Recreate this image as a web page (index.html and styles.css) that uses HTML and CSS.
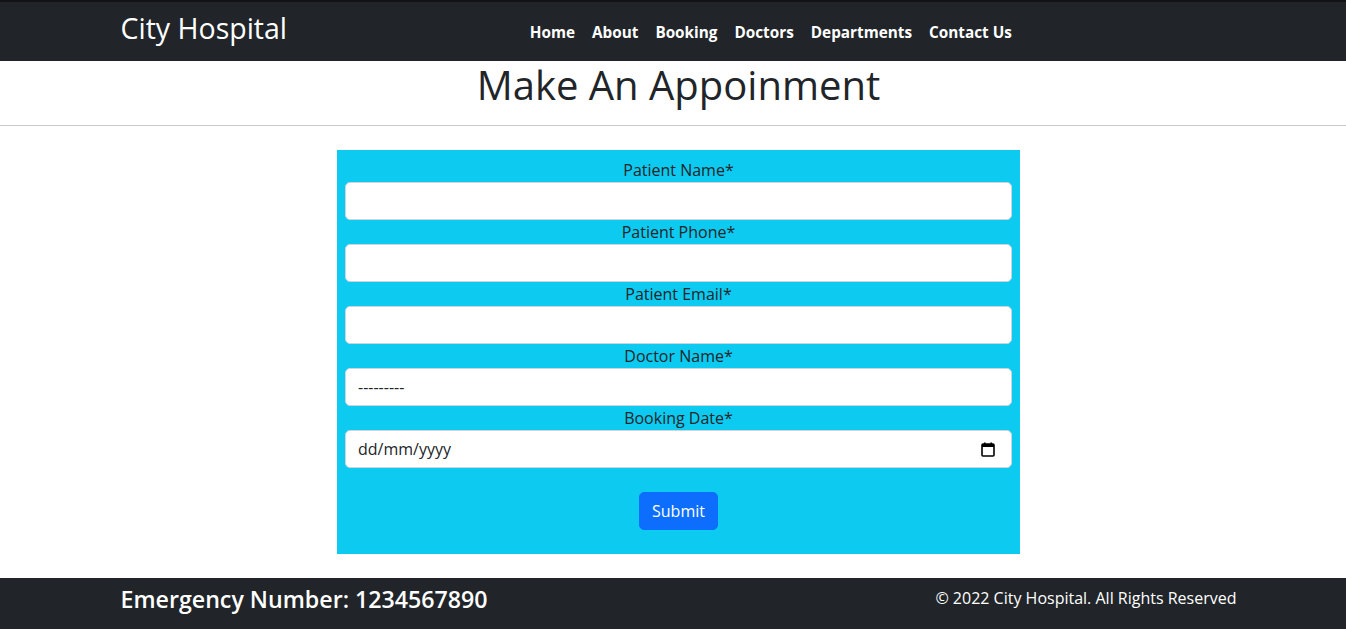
FILE: index.html
```html
<!DOCTYPE html>
<html lang="en">
<head>
<meta charset="utf-8">
<title>City Hospital - Booking</title>
<link rel="stylesheet" href="styles.css">
</head>
<body>
<nav class="navbar">
  <div class="container nav-inner">
    <a class="brand" href="#">City Hospital</a>
    <ul class="nav-links">
      <li><a href="#">Home</a></li>
      <li><a href="#">About</a></li>
      <li><a href="#">Booking</a></li>
      <li><a href="#">Doctors</a></li>
      <li><a href="#">Departments</a></li>
      <li><a href="#">Contact Us</a></li>
    </ul>
  </div>
</nav>

<main class="main">
  <h1 class="page-title">Make An Appoinment</h1>
  <hr class="divider">
  <form class="booking-form">
    <label class="field-label" for="pname">Patient Name*</label>
    <input class="field" id="pname" type="text">
    <label class="field-label" for="pphone">Patient Phone*</label>
    <input class="field" id="pphone" type="text">
    <label class="field-label" for="pemail">Patient Email*</label>
    <input class="field" id="pemail" type="text">
    <label class="field-label" for="doctor">Doctor Name*</label>
    <select class="field select" id="doctor">
      <option>---------</option>
    </select>
    <label class="field-label">Booking Date*</label>
    <div class="field date-field">
      <span class="date-text">dd/mm/yyyy</span>
      <svg class="cal-icon" width="14" height="15" viewBox="0 0 14 15" aria-hidden="true">
        <rect x="3" y="0.5" width="1.6" height="3" fill="#000"/>
        <rect x="9.4" y="0.5" width="1.6" height="3" fill="#000"/>
        <rect x="1" y="2" width="12" height="12" rx="1" fill="none" stroke="#000" stroke-width="1.6"/>
        <rect x="1" y="2" width="12" height="3" fill="#000"/>
      </svg>
    </div>
    <div class="actions">
      <button class="btn-submit" type="button">Submit</button>
    </div>
  </form>
</main>

<footer class="footer">
  <div class="container footer-inner">
    <h4 class="emergency">Emergency Number: 1234567890</h4>
    <p class="copyright">© 2022 City Hospital. All Rights Reserved</p>
  </div>
</footer>
</body>
</html>
```

FILE: styles.css
```css
* { box-sizing: border-box; }

body {
  margin: 0;
  font-family: "Open Sans", "DejaVu Sans", sans-serif;
  font-size: 16px;
  line-height: 1.5;
  color: #212529;
  background: #fff;
}

.container {
  width: 1116px;
  margin: 0 auto;
}

.navbar {
  background: #212529;
  border-top: 2px solid #111315;
  padding-left: 11px;
}

.nav-inner {
  display: flex;
  align-items: center;
  height: 59px;
}

.brand {
  color: #fff;
  text-decoration: none;
  font-size: 28.5px;
  font-weight: 500;
  margin-right: 18px;
  position: relative;
  top: -3px;
}

.nav-links {
  list-style: none;
  display: flex;
  margin: 0 auto;
  padding: 0;
  position: relative;
  top: 1px;
}

.nav-links a {
  display: block;
  color: #fff;
  text-decoration: none;
  font-weight: 700;
  font-size: 15.3px;
  padding: 8px 8.5px;
}

.main {
  padding-left: 11px;
}

.page-title {
  margin: 0;
  text-align: center;
  font-size: 40px;
  font-weight: 500;
  line-height: 48px;
}

.divider {
  margin: 16px 0 0;
  margin-left: -11px;
  border: 0;
  border-top: 1px solid #c8c9ca;
}

.booking-form {
  width: 683px;
  margin: 24px auto 0;
  background: #0dcaf0;
  padding: 8px 8px 24px;
  display: flex;
  flex-direction: column;
}

.field-label {
  text-align: center;
  line-height: 24px;
}

.field {
  display: block;
  width: 100%;
  height: 38px;
  padding: 6px 12px;
  font: inherit;
  color: #212529;
  background: #fff;
  border: 1px solid #ced4da;
  border-radius: 5px;
}

.select {
  appearance: none;
  -webkit-appearance: none;
}

.date-field {
  display: flex;
  align-items: center;
  justify-content: space-between;
  padding-right: 16px;
}

.cal-icon {
  display: block;
}

.actions {
  display: flex;
  justify-content: center;
  margin-top: 24px;
}

.btn-submit {
  font: inherit;
  color: #fff;
  background: #0d6efd;
  border: 1px solid #0d6efd;
  border-radius: 5px;
  padding: 6px 12px;
  line-height: 24px;
}

.footer {
  margin-top: 24px;
  background: #212529;
  color: #fff;
  padding-left: 11px;
  height: 51px;
}

.footer-inner {
  display: flex;
  justify-content: space-between;
  align-items: center;
  height: 100%;
}

.emergency {
  margin: 0;
  font-size: 23.2px;
  font-weight: 600;
  line-height: 1.2;
  position: relative;
  top: -4px;
}

.copyright {
  margin: 0;
  font-size: 16px;
  position: relative;
  top: -6px;
}
```
